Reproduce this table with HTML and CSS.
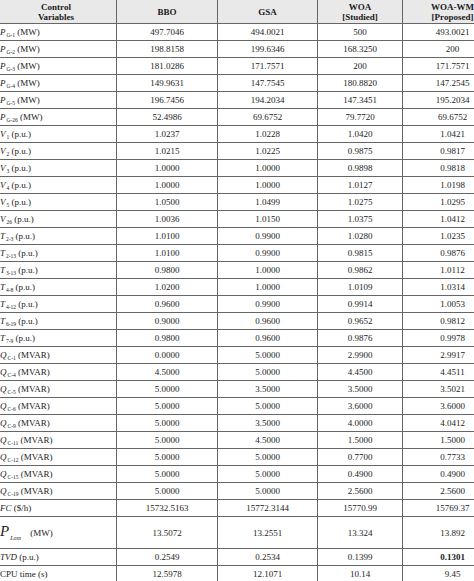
FILE: index.html
```html
<!DOCTYPE html>
<html>
<head>
<meta charset="utf-8">
<link rel="stylesheet" href="styles.css">
</head>
<body>
<table class="results">
  <colgroup>
    <col class="c-var"><col class="c-bbo"><col class="c-gsa"><col class="c-woa"><col class="c-wm">
  </colgroup>
  <thead>
    <tr>
      <th>Control<br>Variables</th>
      <th>BBO</th>
      <th>GSA</th>
      <th>WOA<br>[Studied]</th>
      <th>WOA-WM<br>[Proposed]</th>
    </tr>
  </thead>
  <tbody>
    <tr><td class="var"><i>P</i><sub>G-1</sub> (MW)</td><td>497.7046</td><td>494.0021</td><td>500</td><td>493.0021</td></tr>
    <tr><td class="var"><i>P</i><sub>G-2</sub> (MW)</td><td>198.8158</td><td>199.6346</td><td>168.3250</td><td>200</td></tr>
    <tr><td class="var"><i>P</i><sub>G-3</sub> (MW)</td><td>181.0286</td><td>171.7571</td><td>200</td><td>171.7571</td></tr>
    <tr><td class="var"><i>P</i><sub>G-4</sub> (MW)</td><td>149.9631</td><td>147.7545</td><td>180.8820</td><td>147.2545</td></tr>
    <tr><td class="var"><i>P</i><sub>G-5</sub> (MW)</td><td>196.7456</td><td>194.2034</td><td>147.3451</td><td>195.2034</td></tr>
    <tr><td class="var"><i>P</i><sub>G-26</sub> (MW)</td><td>52.4986</td><td>69.6752</td><td>79.7720</td><td>69.6752</td></tr>
    <tr><td class="var"><i>V</i><sub>1</sub> (p.u.)</td><td>1.0237</td><td>1.0228</td><td>1.0420</td><td>1.0421</td></tr>
    <tr><td class="var"><i>V</i><sub>2</sub> (p.u.)</td><td>1.0215</td><td>1.0225</td><td>0.9875</td><td>0.9817</td></tr>
    <tr><td class="var"><i>V</i><sub>3</sub> (p.u.)</td><td>1.0000</td><td>1.0000</td><td>0.9898</td><td>0.9818</td></tr>
    <tr><td class="var"><i>V</i><sub>4</sub> (p.u.)</td><td>1.0000</td><td>1.0000</td><td>1.0127</td><td>1.0198</td></tr>
    <tr><td class="var"><i>V</i><sub>5</sub> (p.u.)</td><td>1.0500</td><td>1.0499</td><td>1.0275</td><td>1.0295</td></tr>
    <tr><td class="var"><i>V</i><sub>26</sub> (p.u.)</td><td>1.0036</td><td>1.0150</td><td>1.0375</td><td>1.0412</td></tr>
    <tr><td class="var"><i>T</i><sub>2-3</sub> (p.u.)</td><td>1.0100</td><td>0.9900</td><td>1.0280</td><td>1.0235</td></tr>
    <tr><td class="var"><i>T</i><sub>2-13</sub> (p.u.)</td><td>1.0100</td><td>0.9900</td><td>0.9815</td><td>0.9876</td></tr>
    <tr><td class="var"><i>T</i><sub>3-13</sub> (p.u.)</td><td>0.9800</td><td>1.0000</td><td>0.9862</td><td>1.0112</td></tr>
    <tr><td class="var"><i>T</i><sub>4-8</sub> (p.u.)</td><td>1.0200</td><td>1.0000</td><td>1.0109</td><td>1.0314</td></tr>
    <tr><td class="var"><i>T</i><sub>4-12</sub> (p.u.)</td><td>0.9600</td><td>0.9900</td><td>0.9914</td><td>1.0053</td></tr>
    <tr><td class="var"><i>T</i><sub>6-19</sub> (p.u.)</td><td>0.9000</td><td>0.9600</td><td>0.9652</td><td>0.9812</td></tr>
    <tr><td class="var"><i>T</i><sub>7-9</sub> (p.u.)</td><td>0.9800</td><td>0.9600</td><td>0.9876</td><td>0.9978</td></tr>
    <tr><td class="var"><i>Q</i><sub>C-1</sub> (MVAR)</td><td>0.0000</td><td>5.0000</td><td>2.9900</td><td>2.9917</td></tr>
    <tr><td class="var"><i>Q</i><sub>C-4</sub> (MVAR)</td><td>4.5000</td><td>5.0000</td><td>4.4500</td><td>4.4511</td></tr>
    <tr><td class="var"><i>Q</i><sub>C-5</sub> (MVAR)</td><td>5.0000</td><td>3.5000</td><td>3.5000</td><td>3.5021</td></tr>
    <tr><td class="var"><i>Q</i><sub>C-6</sub> (MVAR)</td><td>5.0000</td><td>5.0000</td><td>3.6000</td><td>3.6000</td></tr>
    <tr><td class="var"><i>Q</i><sub>C-9</sub> (MVAR)</td><td>5.0000</td><td>3.5000</td><td>4.0000</td><td>4.0412</td></tr>
    <tr><td class="var"><i>Q</i><sub>C-11</sub> (MVAR)</td><td>5.0000</td><td>4.5000</td><td>1.5000</td><td>1.5000</td></tr>
    <tr><td class="var"><i>Q</i><sub>C-12</sub> (MVAR)</td><td>5.0000</td><td>5.0000</td><td>0.7700</td><td>0.7733</td></tr>
    <tr><td class="var"><i>Q</i><sub>C-15</sub> (MVAR)</td><td>5.0000</td><td>5.0000</td><td>0.4900</td><td>0.4900</td></tr>
    <tr><td class="var"><i>Q</i><sub>C-19</sub> (MVAR)</td><td>5.0000</td><td>5.0000</td><td>2.5600</td><td>2.5600</td></tr>
    <tr><td class="var"><i>FC</i> ($/h)</td><td>15732.5163</td><td>15772.3144</td><td>15770.99</td><td>15769.37</td></tr>
    <tr class="tall"><td class="var"><i class="big">P</i><sub class="loss">Loss</sub><span class="unit">(MW)</span></td><td>13.5072</td><td>13.2551</td><td>13.324</td><td>13.892</td></tr>
    <tr><td class="var"><i>TVD</i> (p.u.)</td><td>0.2549</td><td>0.2534</td><td>0.1399</td><td><b>0.1301</b></td></tr>
    <tr><td class="var">CPU time (s)</td><td>12.5978</td><td>12.1071</td><td>10.14</td><td>9.45</td></tr>
  </tbody>
</table>
</body>
</html>
```

FILE: styles.css
```css
html, body {
  margin: 0;
  padding: 0;
  background: #ffffff;
  overflow: hidden;
}
body {
  width: 474px;
  height: 581px;
}
.results {
  border-collapse: collapse;
  table-layout: fixed;
  width: 507px;
  margin-left: -5px;
  margin-top: -1px;
  font-family: "Liberation Serif", "Times New Roman", serif;
  font-size: 9px;
  color: #1c1c1c;
}
.c-var { width: 121px; }
.c-bbo { width: 101px; }
.c-gsa { width: 100px; }
.c-woa { width: 85px; }
.c-wm  { width: 100px; }

.results th,
.results td {
  border: 1px solid #666666;
  padding: 0;
  text-align: center;
}
.results th {
  background: #e9e9e9;
  font-weight: bold;
  height: 23px;
  line-height: 10px;
  color: #1a1a1a;
}
.results td {
  line-height: 15px;
  padding-top: 1px;
}
.results td.var {
  text-align: left;
  padding-left: 4px;
}
.results tr.tall td {
  height: 30px;
  padding-top: 1px;
}
.results i {
  font-style: italic;
}
.results sub {
  font-size: 5.5px;
  vertical-align: -2px;
  line-height: 0;
  margin-left: 1px;
}
.results .big {
  font-size: 15px;
  line-height: 0;
}
.results sub.loss {
  font-size: 6px;
  font-style: italic;
  vertical-align: -4px;
}
.results .unit {
  margin-left: 9px;
}
```
